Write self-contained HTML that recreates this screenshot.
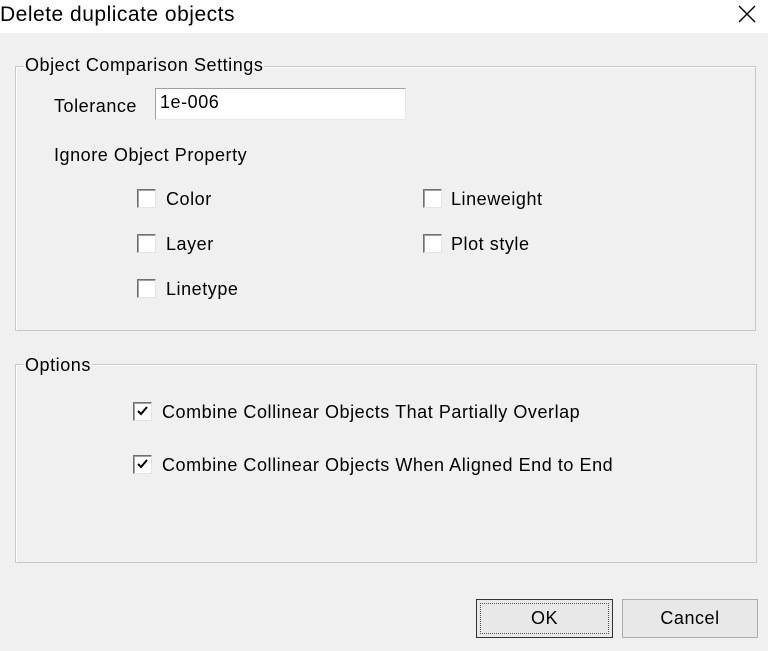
<!DOCTYPE html>
<html><head><style>
body{margin:0;width:768px;height:651px;background:#f0f0f0;font-family:"Liberation Sans",sans-serif;font-size:18px;letter-spacing:0.55px;color:#000;position:relative;overflow:hidden}
.a{position:absolute;white-space:nowrap}
.title{left:0;top:0;width:768px;height:33px;background:#fff}
.grp{position:absolute;border:1px solid #c8c8c8;box-shadow:inset 1px 1px 0 #fff}
.lg{position:absolute;background:#f0f0f0;padding:0 1px}
.cb{position:absolute;width:17px;height:17px;background:#fff;border:1px solid #707070;border-right-color:#e3e3e3;border-bottom-color:#e3e3e3;box-shadow:inset 1px 1px 0 #a0a0a0}
.btn{position:absolute;height:37px;background:#e8e8e8;border:1px solid #adadad;text-align:center;line-height:37px;font-size:18px}
</style></head><body>
<div class="a title"></div>
<div class="a" style="left:0;top:3px;font-size:21px;letter-spacing:0.5px">Delete duplicate objects</div>
<svg class="a" style="left:738px;top:5px" width="18" height="18"><path d="M1 1L17 17M17 1L1 17" stroke="#000" stroke-width="1.4"/></svg>

<div class="grp" style="left:15px;top:66px;width:739px;height:263px"></div>
<div class="lg a" style="left:24px;top:55px">Object Comparison Settings</div>
<div class="a" style="left:54px;top:96px">Tolerance</div>
<div class="a" style="left:155px;top:88px;width:249px;height:30px;background:#fff;border:1px solid #a0a0a0;border-right-color:#e8e8e8;border-bottom-color:#e8e8e8"></div>
<div class="a" style="left:160px;top:92px">1e-006</div>
<div class="a" style="left:54px;top:145px">Ignore Object Property</div>

<div class="cb" style="left:137px;top:189px"></div><div class="a" style="left:166px;top:189px">Color</div>
<div class="cb" style="left:137px;top:234px"></div><div class="a" style="left:166px;top:234px">Layer</div>
<div class="cb" style="left:137px;top:279px"></div><div class="a" style="left:166px;top:279px">Linetype</div>
<div class="cb" style="left:423px;top:189px"></div><div class="a" style="left:451px;top:189px">Lineweight</div>
<div class="cb" style="left:423px;top:234px"></div><div class="a" style="left:451px;top:234px">Plot style</div>

<div class="grp" style="left:15px;top:364px;width:740px;height:197px"></div>
<div class="lg a" style="left:24px;top:355px">Options</div>
<div class="cb" style="left:133px;top:402px"><svg width="17" height="17"><path d="M4 8L7 11L13 4" stroke="#000" stroke-width="2" fill="none"/></svg></div>
<div class="a" style="left:162px;top:402px">Combine Collinear Objects That Partially Overlap</div>
<div class="cb" style="left:133px;top:455px"><svg width="17" height="17"><path d="M4 8L7 11L13 4" stroke="#000" stroke-width="2" fill="none"/></svg></div>
<div class="a" style="left:162px;top:455px">Combine Collinear Objects When Aligned End to End</div>

<div class="btn" style="left:476px;top:599px;width:135px;border:1px solid #333;box-shadow:inset 0 0 0 2px #e8e8e8;"><div class="a" style="left:3px;top:3px;right:3px;bottom:3px;border:1px dotted #555"></div>OK</div>
<div class="btn" style="left:622px;top:599px;width:134px">Cancel</div>
</body></html>
